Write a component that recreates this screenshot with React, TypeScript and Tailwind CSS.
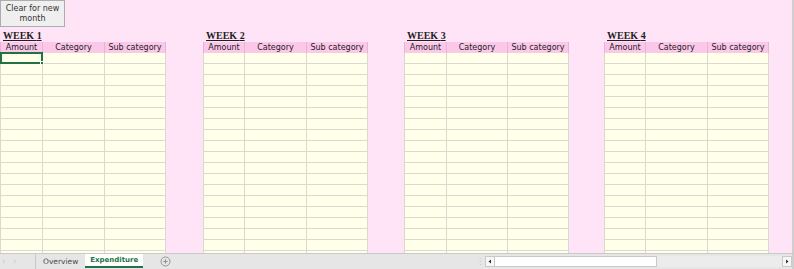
const ROWS = Array.from({ length: 19 }, (_, i) => i);

interface WeekProps {
  n: number;
  cols: [string, string, string];
  selected?: boolean;
}

const Week = ({ n, cols, selected }: WeekProps) => (
  <div className="flex flex-col shrink-0">
    <div className="h-[14px] pl-[3px] pt-[2px] font-['Liberation_Serif',serif] font-bold text-[10px] leading-[11px] text-[#1f1f1f]">
      <span className="underline underline-offset-[1px]">WEEK {n}</span>
    </div>
    <div className="flex border-l border-[#e7b3d6] bg-[#fbc8ea] text-[8px] leading-[11px] text-[#222] h-[11px]">
      <div className={`${cols[0]} text-center border-r border-[#e7b3d6]`}>Amount</div>
      <div className={`${cols[1]} text-center border-r border-[#e7b3d6]`}>Category</div>
      <div className={`${cols[2]} text-center border-r border-[#e7b3d6]`}>Sub category</div>
    </div>
    {ROWS.map((r) => (
      <div key={r} className="flex h-[11px] bg-[#ffffea] border-l border-[#d9d9d0]">
        <div className={`${cols[0]} relative border-r border-b border-[#d9d9d0]`}>
          {selected && r === 0 && (
            <div className="absolute -left-[1px] -top-[1px] -right-[1px] -bottom-[1px] border-2 border-[#217346]">
              <div className="absolute -right-[3px] -bottom-[3px] w-[4px] h-[4px] bg-[#217346] border border-white" />
            </div>
          )}
        </div>
        <div className={`${cols[1]} border-r border-b border-[#d9d9d0]`} />
        <div className={`${cols[2]} border-r border-b border-[#d9d9d0]`} />
      </div>
    ))}
  </div>
);

export default function App() {
  return (
    <div className="w-[794px] h-[269px] flex flex-col overflow-hidden font-['DejaVu_Sans',sans-serif]">
      <div className="flex-1 min-h-0 overflow-hidden bg-[#ffe3f6] border-r-2 border-[#cfcfcf]">
        <button className="w-[65px] h-[27px] bg-[#efefef] border border-[#adadad] text-[8px] leading-[10px] text-[#333] text-center pt-[1px]">
          Clear for new
          <br />
          month
        </button>
        <div className="flex">
          <Week n={1} cols={["w-[42px]", "w-[62px]", "w-[61px]"]} selected />
          <div className="ml-[37px]">
            <Week n={2} cols={["w-[41px]", "w-[62px]", "w-[61px]"]} />
          </div>
          <div className="ml-[36px]">
            <Week n={3} cols={["w-[42px]", "w-[61px]", "w-[61px]"]} />
          </div>
          <div className="ml-[35px]">
            <Week n={4} cols={["w-[41px]", "w-[62px]", "w-[61px]"]} />
          </div>
        </div>
      </div>
      <div className="h-[16px] shrink-0 flex items-stretch bg-[#e6e6e6] border-t border-[#c9c9c9] text-[7.5px]">
        <div className="w-[36px] flex items-center border-r border-[#c9c9c9] text-[#c4c4c4] text-[8px]">
          <span className="ml-[2px]">‹</span>
          <span className="ml-[8px]">›</span>
        </div>
        <div className="flex items-center pl-[7px] pr-[7px] text-[#4a4a4a]">Overview</div>
        <div className="w-[58px] flex items-center justify-center bg-white text-[#217346] font-bold text-[7px] border-b-2 border-[#217346] mb-[1px]">
          Expenditure
        </div>
        <div className="flex items-center ml-[17px]">
          <svg width="11" height="11" viewBox="0 0 11 11">
            <circle cx="5.5" cy="5.5" r="4.5" fill="none" stroke="#8a8a8a" strokeWidth="0.9" />
            <path d="M5.5 3.2v4.6M3.2 5.5h4.6" stroke="#8a8a8a" strokeWidth="0.9" />
          </svg>
        </div>
        <div className="flex-1" />
        <div className="w-[10px] flex items-center justify-center text-[#bdbdbd] text-[8px]">⋮</div>
        <div className="w-[10px] my-[2px] flex items-center justify-center bg-[#f7f7f7] border border-[#c9c9c9]">
          <svg width="4" height="5" viewBox="0 0 4 5">
            <path d="M3 0.5 L0.5 2.5 L3 4.5Z" fill="#333" />
          </svg>
        </div>
        <div className="w-[162px] my-[2px] bg-white border-y border-r border-[#c9c9c9]" />
        <div className="w-[125px] my-[2px] bg-[#ececec]" />
        <div className="w-[10px] my-[2px] flex items-center justify-center bg-[#f7f7f7] border border-[#c9c9c9]">
          <svg width="4" height="5" viewBox="0 0 4 5">
            <path d="M1 0.5 L3.5 2.5 L1 4.5Z" fill="#333" />
          </svg>
        </div>
        <div className="w-[2px] bg-[#cfcfcf]" />
      </div>
    </div>
  );
}
